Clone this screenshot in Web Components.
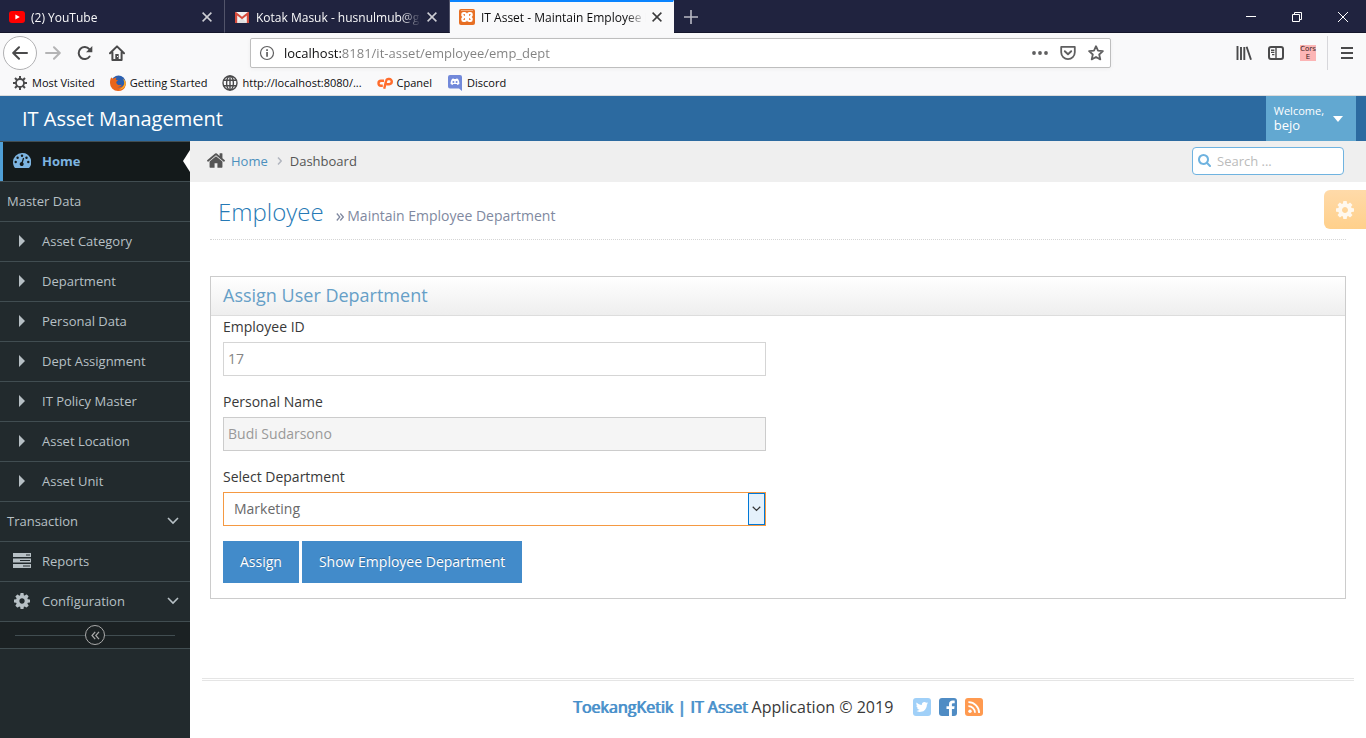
<!DOCTYPE html>
<html lang="en">
<head>
<meta charset="utf-8">
<meta name="viewport" content="width=device-width, initial-scale=1">
<title>IT Asset - Maintain Employee Department</title>
<style>
    html, body {
        margin: 0;
        height: 100%;
    }

    body {
        font-family: "Open Sans", "Noto Sans", sans-serif;
        font-size: 13px;
        color: #393939;
        background: #fff;
    }
</style>
</head>
<body>
<app-window>
    <browser-chrome slot="chrome"></browser-chrome>
    <app-navbar slot="navbar" brand="IT Asset Management" user="bejo"></app-navbar>
    <app-sidebar slot="sidebar">
        <nav-item icon="dashboard" active>Home</nav-item>
        <nav-item>Master Data</nav-item>
        <nav-item icon="caret">Asset Category</nav-item>
        <nav-item icon="caret">Department</nav-item>
        <nav-item icon="caret">Personal Data</nav-item>
        <nav-item icon="caret">Dept Assignment</nav-item>
        <nav-item icon="caret">IT Policy Master</nav-item>
        <nav-item icon="caret">Asset Location</nav-item>
        <nav-item icon="caret">Asset Unit</nav-item>
        <nav-item dropdown>Transaction</nav-item>
        <nav-item icon="tasks">Reports</nav-item>
        <nav-item icon="cog" dropdown>Configuration</nav-item>
    </app-sidebar>
    <app-breadcrumbs current="Dashboard"></app-breadcrumbs>
    <page-content>
        <page-heading subtitle="Maintain Employee Department">Employee</page-heading>
        <widget-box heading="Assign User Department">
            <form-field label="Employee ID" value="17"></form-field>
            <form-field label="Personal Name" value="Budi Sudarsono" disabled></form-field>
            <form-select label="Select Department" value="Marketing"></form-select>
            <button-row>
                <action-button>Assign</action-button>
                <action-button>Show Employee Department</action-button>
            </button-row>
        </widget-box>
    </page-content>
    <app-footer></app-footer>
</app-window>

<script>
const COG = '<path fill="currentColor" d="M1152 896q0-106-75-181t-181-75-181 75-75 181 75 181 181 75 181-75 75-181zm512-109v222q0 12-8 23t-20 13l-185 28q-19 54-39 91 35 50 107 138 10 12 10 25t-9 23q-27 37-99 108t-94 71q-12 0-26-9l-138-108q-44 23-91 38-16 136-29 186-7 28-36 28h-222q-14 0-24.500-8.500t-11.500-21.500l-28-184q-49-16-90-37l-141 107q-10 9-25 9-14 0-25-11-126-114-165-168-7-10-7-23 0-12 8-23 15-21 51-66.500t54-70.500q-27-50-41-99l-183-27q-13-2-21-12.500t-8-23.500v-222q0-12 8-23t19-13l186-28q14-46 39-92-40-57-107-138-10-12-10-24 0-10 9-23 26-36 98.500-107.500t94.500-71.500q13 0 26 10l138 107q44-23 91-38 16-136 29-186 7-28 36-28h222q14 0 24.500 8.500t11.500 21.500l28 184q49 16 90 37l142-107q9-9 24-9 13 0 25 10 129 119 165 170 7 8 7 22 0 12-8 23-15 21-51 66.500t-54 70.500q26 50 41 98l183 28q13 2 21 12.500t8 23.500z"/>';

// name: [viewBox, markup]
const ICONS = {
	cog: ["128 128 1536 1536", COG],
	home: ["90 250 1612 1290", '<path fill="currentColor" d="M1472 992v480q0 26-19 45t-45 19h-384v-384h-256v384h-384q-26 0-45-19t-19-45v-480q0-1 .5-3t.5-3l575-474 575 474q1 2 1 6zm223-69l-62 74q-8 9-21 11h-3q-13 0-21-7l-692-577-692 577q-12 8-24 7-13-2-21-11l-62-74q-8-10-7-23.500t11-21.500l719-599q32-26 76-26t76 26l244 204v-195q0-14 9-23t23-9h192q14 0 23 9t9 23v408l219 182q10 8 11 21.500t-7 23.500z"/>'],
	search: ["64 128 1664 1664", '<path fill="currentColor" d="M1216 832q0-185-131.500-316.500t-316.500-131.500-316.500 131.500-131.500 316.500 131.500 316.500 316.500 131.500 316.500-131.500 131.500-316.500zm512 832q0 52-38 90t-90 38q-54 0-90-38l-343-342q-179 124-399 124-143 0-273.500-55.500t-225-150-150-225-55.500-273.500 55.500-273.500 150-225 225-150 273.500-55.500 273.500 55.500 225 150 150 225 55.500 273.500q0 220-124 399l343 343q37 37 37 90z"/>'],
	dashboard: ["0 0 18 15", '<path fill="currentColor" d="M9 0a9 9 0 0 0-9 9c0 2 .5 3.700 1.400 5.200.2.500.6.800 1 .8h13.200c.4 0 .8-.3 1-.8A9 9 0 0 0 9 0z"/><g fill="#141a1b"><circle cx="2.700" cy="9" r="1.200"/><circle cx="4.600" cy="4.700" r="1.200"/><circle cx="9" cy="2.800" r="1.200"/><circle cx="13.500" cy="4.700" r="1.200"/><circle cx="15.300" cy="9" r="1.200"/><path d="M10 4.800l1.200.4-1.300 4.300a2 2 0 1 1-1.300-.4z"/></g>'],
	tasks: ["0 0 18 15", '<path fill="currentColor" fill-rule="evenodd" d="M0 0h18v4H0zM13 1.500h4v1h-4zM0 5.500h18v4H0zM7 7h10v1H7zM0 11h18v4H0zM10 12.500h7v1h-7z"/>'],
	caret: ["0 0 8 12", '<path fill="currentColor" d="M1 0v12l6-6z"/>'],
	caretDown: ["0 0 10 6", '<path fill="currentColor" d="M0 0h10L5 6z"/>'],
	chevronDown: ["0 0 12 8", '<path fill="none" stroke="currentColor" stroke-width="1.600" d="M1 1l5 5 5-5"/>'],
	chevronRight: ["0 0 5 8", '<path fill="none" stroke="currentColor" stroke-width="1.500" d="M1 .5L4.200 4 1 7.500"/>'],
	doubleRight: ["0 0 8 8", '<path fill="none" stroke="currentColor" stroke-width="1.300" d="M.8 .5L3.800 4 .8 7.500M4.300 .5l3 3.500-3 3.500"/>'],
	doubleLeft: ["0 0 9 9", '<path fill="none" stroke="currentColor" stroke-width="1.200" d="M4.200 .8L1 4.500l3.200 3.700M8 .8L4.800 4.500 8 8.200"/>'],
	twitter: ["0 0 18 18", '<rect width="18" height="18" rx="3" fill="#a0d0f8"/><path fill="#fff" transform="translate(2 2) scale(.0078)" d="M1684 408q-67 98-162 167 1 14 1 42 0 130-38 259.500t-115.500 248.500-184.500 210.500-258 146-323 54.500q-271 0-496-145 35 4 78 4 225 0 401-138-105-2-188-64.500t-114-159.500q33 5 61 5 43 0 85-11-112-23-185.500-111.500t-73.500-205.500v-4q68 38 146 41-66-44-105-115t-39-154q0-88 44-163 121 149 294.500 238.500t371.500 99.500q-8-38-8-74 0-134 94.500-228.500t228.500-94.500q140 0 236 102 109-21 205-78-37 115-142 178 93-10 186-50z"/>'],
	facebook: ["0 0 18 18", '<rect width="18" height="18" rx="3" fill="#4f8cc4"/><path fill="#fff" d="M10 18v-7H7.500V8.200H10V6.300C10 3.900 11.500 2.600 13.600 2.600c1 0 1.900.1 2.100.1v2.500h-1.400c-1.200 0-1.400.6-1.400 1.400v1.600h2.700l-.4 2.800h-2.300v7z"/>'],
	rss: ["0 0 18 18", '<rect width="18" height="18" rx="3" fill="#ff9a50"/><circle cx="5" cy="13.200" r="1.700" fill="#fff"/><path fill="none" stroke="#fff" stroke-width="1.800" d="M3.400 8.200a6.500 6.500 0 0 1 6.600 6.600M3.400 4.200a10.500 10.500 0 0 1 10.700 10.700"/>'],
	youtube: ["0 0 16 12", '<rect width="16" height="12" rx="3" fill="#f00"/><path fill="#fff" d="M6.400 3.400v5.200L10.800 6z"/>'],
	gmail: ["0 0 14 11", '<path fill="#f2f2f2" d="M0 0h14v11H0z"/><path fill="#ccc" d="M2 11l5-5 5 5z" opacity=".5"/><path fill="#d54b3d" d="M0 0h1l6 4.800L13 0h1v11h-2.200V3.400L7 7.200 2.200 3.400V11H0z"/>'],
	xampp: ["0 0 16 16", '<rect width="16" height="16" rx="2" fill="#e76f24"/><path fill="#f4ab7c" d="M2 1h12v1H2z"/><g fill="none" stroke="#fff" stroke-width="2.200" stroke-linejoin="round"><path d="M3.400 6.400V5.200c0-.7.500-1.200 1.200-1.200h1c1 0 1.400.6 1.400 1.400v5.200c0 .8-.5 1.400-1.400 1.400h-1c-.7 0-1.200-.5-1.200-1.200V9.600L5 8z"/><path d="M12.600 6.400V5.200c0-.7-.5-1.200-1.200-1.200h-1C9.400 4 9 4.600 9 5.400v5.200c0 .8.5 1.400 1.400 1.400h1c.7 0 1.200-.5 1.200-1.200V9.600L11 8z"/></g><path fill="#fff" d="M5 7h6v2H5z"/>'],
	close: ["0 0 10 10", '<path fill="none" stroke="currentColor" stroke-width="1.500" d="M.6 .6l8.800 8.800M9.400 .6L.6 9.400"/>'],
	plus: ["0 0 14 14", '<path fill="none" stroke="currentColor" stroke-width="1.600" d="M7 0v14M0 7h14"/>'],
	minimize: ["0 0 10 10", '<path fill="currentColor" d="M0 4h10v1H0z"/>'],
	restore: ["0 0 10 10", '<path fill="none" stroke="currentColor" d="M.5 2.500h7v7h-7zM2.500 2.500v-2h7v7h-2"/>'],
	winClose: ["0 0 10 10", '<path fill="none" stroke="currentColor" d="M0 0l10 10M10 0L0 10"/>'],
	back: ["0 0 16 16", '<path fill="none" stroke="currentColor" stroke-width="2" stroke-linecap="round" stroke-linejoin="round" d="M15 8H1.500M7 2.200L1.200 8 7 13.800"/>'],
	forward: ["0 0 16 16", '<path fill="none" stroke="currentColor" stroke-width="2" stroke-linecap="round" stroke-linejoin="round" d="M1 8h13.500M9 2.200L14.800 8 9 13.800"/>'],
	reload: ["0 0 16 16", '<path fill="none" stroke="currentColor" stroke-width="2" stroke-linecap="round" d="M12.600 11.500A6 6 0 1 1 12.300 4.200"/><path fill="currentColor" d="M15.300 1v6.200H9z"/>'],
	house: ["0 0 16 16", '<path fill="none" stroke="currentColor" stroke-width="2" stroke-linejoin="round" stroke-linecap="round" d="M1 8.200L8 1.400l7 6.800M3.400 7.500V15h9.200V7.500"/><path fill="currentColor" d="M6.300 9h3.400v6H6.300z"/><path fill="#f9f9fa" d="M8 11h1v1H8z"/>'],
	info: ["0 0 16 16", '<circle cx="8" cy="8" r="6.500" fill="none" stroke="currentColor" stroke-width="1.200"/><path fill="currentColor" d="M7.200 4.300h1.700V6H7.200zM7.200 7h1.700v4.800H7.200z"/>'],
	dots: ["0 0 16 16", '<g fill="currentColor"><circle cx="2" cy="8" r="1.900"/><circle cx="8" cy="8" r="1.900"/><circle cx="14" cy="8" r="1.900"/></g>'],
	pocket: ["0 0 16 16", '<path fill="none" stroke="currentColor" stroke-width="1.800" stroke-linejoin="round" d="M1.200 1.900h13.600v5.400a6.800 6.800 0 0 1-13.600 0z"/><path fill="none" stroke="currentColor" stroke-width="1.900" stroke-linecap="round" stroke-linejoin="round" d="M4.800 6.200L8 9.200l3.200-3"/>'],
	star: ["0 0 16 16", '<path fill="none" stroke="currentColor" stroke-width="1.800" stroke-linejoin="round" d="M8 1.200l2 4.500 4.900.5-3.700 3.300 1.100 4.900L8 12l-4.300 2.400 1.100-4.900L1.100 6.200 6 5.700z"/>'],
	library: ["0 0 16 16", '<path fill="none" stroke="currentColor" stroke-width="1.900" d="M1.500 1v14M5 2v13M8.300 2v13M10.600 1.800l4.400 13"/>'],
	sidebars: ["0 0 16 16", '<rect x="1" y="2" width="14" height="12" rx="2" fill="none" stroke="currentColor" stroke-width="2"/><path fill="none" stroke="currentColor" stroke-width="1.400" d="M8 2v12M3 5.200h3.400M3 7.400h3.400M4 9.600h2.400"/>'],
	menu: ["0 0 12 12", '<path fill="currentColor" d="M0 0h12v2H0zM0 5h12v2H0zM0 10h12v2H0z"/>'],
	gear: ["0 0 16 16", '<circle cx="8" cy="8" r="4" fill="none" stroke="currentColor" stroke-width="1.800"/><path stroke="currentColor" stroke-width="2" d="M8 1v3M8 12v3M1 8h3M12 8h3M3 3l2.200 2.200M10.800 10.800L13 13M13 3l-2.200 2.200M5.200 10.800L3 13"/>'],
	firefox: ["0 0 16 16", '<circle cx="8.500" cy="7.500" r="7" fill="#2a5fb0"/><path fill="#e8641b" d="M1.300 2.200c.5 1 1.200 1.300 2.600 1.300 1-.8 2.200-.8 2.900-.8-.7.600-1.100 1.300-.9 2.100l2 .4c.1.800-1 1-1.700 1.700 0 2.400 2.800 4 5.600 2.600-.6 2-2.600 2.700-4.500 2.400 3 1.300 6.400-.4 7-3.600.3-1.600 0-3-.5-4 1.700 1.700 2.300 4 2 5.600A8 8 0 0 1 8 16 8 8 0 0 1 0 8c0-2.300.4-4.400 1.300-5.800z"/><path fill="#fbb42c" d="M12.600 3.800c2.900 3 2.400 8.700-3.600 10.700 4 0 6.900-3 6.700-6.800-.3-1.700-1.500-3.200-3.100-3.900z"/>'],
	globe: ["0 0 16 16", '<g fill="none" stroke="currentColor" stroke-width="1.400"><circle cx="8" cy="8" r="7"/><ellipse cx="8" cy="8" rx="3.400" ry="7"/><path d="M8 1v14M1.800 5.300h12.400M1.800 10.700h12.400"/></g>'],
	cpanel: ["0 0 16 12", '<g fill="none" stroke="#ff6c2c" stroke-width="2.400"><path d="M7 3.800H4a2.500 2.500 0 0 0 0 5h1.800"/><path d="M7.200 11.800L9.200 3.600a2 2 0 0 1 2-1.600h1a2.600 2.600 0 0 1 0 5.200H9.500"/></g>'],
	discord: ["0 0 14 16", '<path fill="#7289da" d="M2 0h10a2 2 0 0 1 2 2v14l-3-2.500H2a2 2 0 0 1-2-2V2a2 2 0 0 1 2-2z"/><path fill="#fff" fill-rule="evenodd" d="M4.200 3.800l1.400-.3.300.5h2.200l.3-.5 1.400.3c1.300 1.700 1.700 3.700 1.600 5.300l-2 1-.7-1H5.300l-.7 1-2-1c-.1-1.600.3-3.600 1.600-5.300zM5.400 6a1 1 0 1 0 0 2 1 1 0 0 0 0-2zM8.600 6a1 1 0 1 0 0 2 1 1 0 0 0 0-2z"/>']
};

function define(name, html, setup) {
	const template = document.createElement("template");
	template.innerHTML = html;
	customElements.define(name, class extends HTMLElement {
		constructor() {
			super();
			this.attachShadow({ mode: "open" });
			this.shadowRoot.appendChild(template.content.cloneNode(true));
		}
		connectedCallback() {
			if (setup) setup(this, selector => this.shadowRoot.querySelector(selector));
		}
	});
}

// size comes from --w and --h on the element
define("ui-icon", `
<style>
    :host {
        display: inline-block;
        flex: none;
        width: var(--w, 16px);
        height: var(--h, var(--w, 16px));
    }
    svg {
        display: block;
        width: 100%;
        height: 100%;
    }
</style>
<svg aria-hidden="true"></svg>
`, (host, $) => {
	const [viewBox, markup] = ICONS[host.getAttribute("name")];
	$("svg").setAttribute("viewBox", viewBox);
	$("svg").innerHTML = markup;
});

define("app-window", `
<style>
    :host {
        display: flex;
        flex-direction: column;
        min-height: 100vh;
    }
    .body {
        flex: 1;
        display: flex;
    }
    main {
        flex: 1;
        min-width: 0;
        display: flex;
        flex-direction: column;
        position: relative;
    }
    /* floats over the page's right edge */
    .settings {
        position: absolute;
        right: 0;
        top: 49px;
        width: 42px;
        height: 39px;
        padding: 0;
        border: 0;
        border-radius: 6px 0 0 6px;
        background: linear-gradient(#ffdaa9, #ffd08b);
        color: #fff8ee;
        display: flex;
        align-items: center;
        justify-content: center;
        --w: 18px;
    }
</style>
<slot name="chrome"></slot>
<slot name="navbar"></slot>
<div class="body">
    <slot name="sidebar"></slot>
    <main>
        <slot></slot>
        <button class="settings" aria-label="Settings"><ui-icon name="cog"></ui-icon></button>
    </main>
</div>
`);

define("browser-tab", `
<style>
    :host {
        display: flex;
        align-items: center;
        box-sizing: border-box;
        flex: 0 1 225px;
        min-width: 0;
        height: 33px;
        padding: 2px 12px 0 9px;
        border-right: 1px solid #52546a;
        border-bottom: 1px solid #14162b;
        color: #f9f9fa;
        font-size: 12px;
    }
    :host([active]) {
        flex-basis: 224px;
        padding-top: 0;
        padding-right: 11px;
        background: #f9f9fa;
        border-top: 2px solid #0a84ff;
        border-right-color: #f9f9fa;
        border-bottom-color: #f9f9fa;
        color: #0c0c0d;
    }
    span {
        flex: 1;
        min-width: 0;
        margin: 0 6px;
        overflow: hidden;
        white-space: nowrap;
        -webkit-mask-image: linear-gradient(to left, transparent, #000 20px);
        mask-image: linear-gradient(to left, transparent, #000 20px);
    }
    button {
        padding: 0;
        border: 0;
        background: none;
        color: inherit;
        opacity: 0.8;
        display: flex;
        --w: 10px;
    }
</style>
<span><slot></slot></span>
<button aria-label="Close tab"><ui-icon name="close"></ui-icon></button>
`, (host, $) => {
	const icon = document.createElement("ui-icon");
	icon.setAttribute("name", host.getAttribute("icon"));
	icon.style.setProperty("--h", host.getAttribute("icon-height") || "16px");
	$("span").before(icon);
});

define("book-mark", `
<style>
    :host { display: block; }
    a {
        display: flex;
        align-items: center;
        gap: 4px;
        color: #0c0c0d;
        font-size: 11px;
        line-height: 16px;
        white-space: nowrap;
        text-decoration: none;
    }
    ui-icon { color: #4a4a4b; }
</style>
<a href="#"><slot></slot></a>
`, (host, $) => {
	const icon = document.createElement("ui-icon");
	icon.setAttribute("name", host.getAttribute("icon"));
	$("a").prepend(icon);
});

define("browser-chrome", `
<style>
    :host {
        display: block;
        background: #f9f9fa;
        border-bottom: 1px solid #dcdcdc;
        color: #4a4a4b;
    }
    button {
        flex: none;
        display: flex;
        align-items: center;
        justify-content: center;
        padding: 0;
        border: 0;
        background: none;
        color: inherit;
    }
    .tabs {
        display: flex;
        height: 33px;
        background: #20233f;
        box-shadow: inset 0 -1px #14162b;
    }
    .new {
        width: 34px;
        color: #b9bac5;
        --w: 14px;
    }
    .controls {
        margin-left: auto;
        display: flex;
        color: #fff;
        --w: 10px;
    }
    .controls button { width: 46px; }
    .toolbar {
        display: flex;
        align-items: center;
        height: 40px;
        padding: 0 3px;
    }
    .toolbar > button {
        width: 32px;
        height: 32px;
    }
    .toolbar > .back {
        width: 34px;
        height: 34px;
        box-sizing: border-box;
        border: 1px solid #b1b1b3;
        border-radius: 50%;
        background: #fff;
    }
    .toolbar > .forward { color: #b4b4b5; }
    .url {
        flex: 1;
        min-width: 0;
        display: flex;
        align-items: center;
        box-sizing: border-box;
        height: 30px;
        margin: 0 117px;
        padding: 0 0 0 8px;
        border: 1px solid #bebebe;
        border-radius: 2px;
        background: #fff;
        box-shadow: 0 1px 4px rgba(0, 0, 0, 0.05);
        color: #5f5f60;
    }
    .url button { width: 28px; }
    /* the host part is darker than the path */
    input {
        flex: 1;
        min-width: 0;
        padding: 0 9px;
        border: 0;
        outline: 0;
        font: 13px "Open Sans", sans-serif;
        color: #737373;
        background: linear-gradient(to right, #0c0c0d 67px, #808080 67px);
        -webkit-background-clip: text;
        background-clip: text;
        -webkit-text-fill-color: transparent;
    }
    .cors {
        width: 16px;
        height: 16px;
        background: #fcb5b5;
        color: #3a2222;
        font: 7px/8px "DejaVu Sans", sans-serif;
        text-align: center;
    }
    .divider {
        width: 1px;
        height: 34px;
        margin: 0 3px;
        background: #d7d7db;
    }
    .menu { --w: 12px; }
    .bookmarks {
        display: flex;
        gap: 15px;
        padding: 2px 12px 4px;
    }
</style>
<div class="tabs">
    <browser-tab icon="youtube" icon-height="12px">(2) YouTube</browser-tab>
    <browser-tab icon="gmail" icon-height="11px">Kotak Masuk - husnulmub@gmail</browser-tab>
    <browser-tab icon="xampp" active>IT Asset - Maintain Employee Department</browser-tab>
    <button class="new" aria-label="New tab"><ui-icon name="plus"></ui-icon></button>
    <div class="controls">
        <button aria-label="Minimize"><ui-icon name="minimize"></ui-icon></button>
        <button aria-label="Restore"><ui-icon name="restore"></ui-icon></button>
        <button aria-label="Close"><ui-icon name="winClose"></ui-icon></button>
    </div>
</div>
<div class="toolbar">
    <button class="back" aria-label="Back"><ui-icon name="back"></ui-icon></button>
    <button class="forward" aria-label="Forward"><ui-icon name="forward"></ui-icon></button>
    <button aria-label="Reload"><ui-icon name="reload"></ui-icon></button>
    <button aria-label="Home"><ui-icon name="house"></ui-icon></button>
    <div class="url">
        <ui-icon name="info"></ui-icon>
        <input type="text" aria-label="Address" value="localhost:8181/it-asset/employee/emp_dept">
        <button aria-label="Page actions"><ui-icon name="dots"></ui-icon></button>
        <button aria-label="Pocket"><ui-icon name="pocket"></ui-icon></button>
        <button aria-label="Bookmark"><ui-icon name="star"></ui-icon></button>
    </div>
    <button aria-label="Library"><ui-icon name="library"></ui-icon></button>
    <button aria-label="Sidebars"><ui-icon name="sidebars"></ui-icon></button>
    <button aria-label="Cors"><span class="cors">Cors E</span></button>
    <span class="divider"></span>
    <button class="menu" aria-label="Menu"><ui-icon name="menu"></ui-icon></button>
</div>
<div class="bookmarks">
    <book-mark icon="gear">Most Visited</book-mark>
    <book-mark icon="firefox">Getting Started</book-mark>
    <book-mark icon="globe">http://localhost:8080/...</book-mark>
    <book-mark icon="cpanel">Cpanel</book-mark>
    <book-mark icon="discord">Discord</book-mark>
</div>
`);

define("app-navbar", `
<style>
    :host {
        display: flex;
        justify-content: space-between;
        height: 45px;
        padding: 0 10px 0 22px;
        background: #2c6aa0;
        color: #fff;
    }
    a {
        color: inherit;
        font-size: 20px;
        line-height: 45px;
        text-decoration: none;
    }
    button {
        display: flex;
        align-items: center;
        gap: 9px;
        padding: 0 13px 0 8px;
        border: 0;
        background: #62a8d1;
        color: inherit;
        font: 13px/15px "Open Sans", sans-serif;
        text-align: left;
        --w: 10px;
        --h: 6px;
    }
    button > span { padding-bottom: 2px; }
    small {
        display: block;
        font-size: 11px;
    }
</style>
<a href="#"></a>
<button><span><small>Welcome,</small><span class="user"></span></span><ui-icon name="caretDown"></ui-icon></button>
`, (host, $) => {
	$("a").textContent = host.getAttribute("brand");
	$(".user").textContent = host.getAttribute("user");
});

define("app-sidebar", `
<style>
    :host {
        flex: none;
        width: 190px;
        background: #222a2d;
    }
    nav { border-top: 1px solid #414d51; }
    .toggle {
        display: flex;
        align-items: center;
        height: 26px;
        padding: 0 15px;
        background: #1b2123;
        border-bottom: 1px solid #414d51;
    }
    .toggle::before, .toggle::after {
        content: "";
        flex: 1;
        height: 1px;
        background: #414d51;
    }
    button {
        display: flex;
        align-items: center;
        justify-content: center;
        width: 20px;
        height: 20px;
        padding: 0;
        border: 1px solid #aaa;
        border-radius: 50%;
        background: none;
        color: #aaa;
        --w: 9px;
    }
</style>
<nav><slot></slot></nav>
<div class="toggle"><button aria-label="Collapse menu"><ui-icon name="doubleLeft"></ui-icon></button></div>
`);

define("nav-item", `
<style>
    :host {
        display: block;
        position: relative;
        border-bottom: 1px solid #414d51;
        color: #b7c0c5;
    }
    a {
        display: flex;
        align-items: center;
        height: 37px;
        padding: 0 11px 2px 7px;
        color: inherit;
        text-decoration: none;
    }
    .icon {
        width: 30px;
        margin-right: 5px;
        display: flex;
        justify-content: center;
        --w: 18px;
        --h: 15px;
    }
    .icon.caret {
        --w: 8px;
        --h: 12px;
    }
    .icon.cog {
        --w: 16px;
        --h: 16px;
    }
    .arrow {
        margin-left: auto;
        --w: 12px;
        --h: 8px;
    }
    [hidden] { display: none; }
    :host([active]) {
        background: #141a1b;
        color: #7db4e0;
        font-weight: bold;
    }
    :host([active]) a {
        border-left: 3px solid #4f9fd6;
        padding-left: 4px;
    }
    /* notch pointing at the open page */
    :host([active])::after {
        content: "";
        position: absolute;
        right: 0;
        top: 8px;
        border: solid transparent;
        border-width: 11px 7px 11px 0;
        border-right-color: #fff;
    }
</style>
<a href="#"><span class="icon" hidden></span><slot></slot><ui-icon class="arrow" name="chevronDown"></ui-icon></a>
`, (host, $) => {
	const name = host.getAttribute("icon");
	if (name) {
		$(".icon").innerHTML = `<ui-icon name="${name}"></ui-icon>`;
		$(".icon").classList.add(name);
		$(".icon").hidden = false;
	}
	$(".arrow").hidden = !host.hasAttribute("dropdown");
});

define("app-breadcrumbs", `
<style>
    :host {
        display: flex;
        align-items: center;
        justify-content: space-between;
        height: 39px;
        padding: 0 22px 2px 17px;
        background: #efefef;
        color: #555;
    }
    nav {
        display: flex;
        align-items: center;
    }
    .home {
        margin-right: 6px;
        --w: 18px;
        --h: 15px;
    }
    .sep {
        margin: 0 8px 0 9px;
        color: #b2b6bf;
        --w: 5px;
        --h: 8px;
    }
    a {
        color: #4c8fbd;
        text-decoration: none;
    }
    label {
        display: flex;
        align-items: center;
        box-sizing: border-box;
        width: 152px;
        height: 28px;
        padding: 0 6px 0 5px;
        gap: 6px;
        border: 1px solid #6fb3e0;
        border-radius: 4px;
        background: #fff;
        color: #6fb3e0;
        --w: 13px;
    }
    input {
        flex: 1;
        min-width: 0;
        padding: 0;
        border: 0;
        outline: 0;
        background: none;
        font: 13px "Open Sans", sans-serif;
        color: #666;
    }
    input::placeholder { color: #bbb; }
</style>
<nav>
    <ui-icon class="home" name="home"></ui-icon>
    <a href="#">Home</a>
    <ui-icon class="sep" name="chevronRight"></ui-icon>
    <span class="current"></span>
</nav>
<label><ui-icon name="search"></ui-icon><input type="text" placeholder="Search ..." aria-label="Search"></label>
`, (host, $) => {
	$(".current").textContent = host.getAttribute("current");
});

define("page-content", `
<style>
    :host {
        display: flex;
        flex-direction: column;
        gap: 36px;
        padding: 12px 20px 24px;
    }
</style>
<slot></slot>
`);

define("page-heading", `
<style>
    :host {
        display: block;
        padding: 0 8px 9px;
        border-bottom: 1px dotted #d5d5d5;
    }
    h1 {
        display: flex;
        align-items: baseline;
        margin: 0;
        color: #2679b5;
        font-size: 24px;
        font-weight: 300;
        line-height: 36px;
    }
    small {
        margin-left: 12px;
        color: #8089a0;
        font-size: 14px;
        font-weight: 400;
        line-height: 20px;
        --w: 8px;
    }
</style>
<h1><slot></slot><small><ui-icon name="doubleRight"></ui-icon> <span></span></small></h1>
`, (host, $) => {
	$("span").textContent = host.getAttribute("subtitle");
});

define("widget-box", `
<style>
    :host {
        display: block;
        border: 1px solid #ccc;
    }
    h4 {
        margin: 0;
        padding: 0 12px 2px;
        border-bottom: 1px solid #ddd;
        background: linear-gradient(#fff, #eee);
        color: #669fc7;
        font-size: 18px;
        font-weight: 400;
        line-height: 36px;
    }
    form {
        display: flex;
        flex-direction: column;
        gap: 15px;
        padding: 0 12px 15px;
    }
</style>
<h4></h4>
<form><slot></slot></form>
`, (host, $) => {
	$("h4").textContent = host.getAttribute("heading");
});

const FIELD_STYLE = `
    :host {
        display: block;
        width: calc(50% - 12px);
    }
    label {
        display: block;
        margin-bottom: 5px;
        font-size: 14px;
        line-height: 21px;
    }
    input, select {
        display: block;
        box-sizing: border-box;
        width: 100%;
        height: 34px;
        margin: 0;
        border: 1px solid #d5d5d5;
        border-radius: 0;
        outline: 0;
        background: #fff;
        color: #858585;
        font: 14px "Open Sans", sans-serif;
    }
`;

define("form-field", `
<style>
    ${FIELD_STYLE}
    input { padding: 0 4px 2px; }
    input:disabled {
        background: #f5f5f5;
        border-color: #ccc;
        color: #999;
    }
</style>
<label for="field"></label>
<input id="field" type="text">
`, (host, $) => {
	$("label").textContent = host.getAttribute("label");
	$("input").value = host.getAttribute("value");
	$("input").disabled = host.hasAttribute("disabled");
});

define("form-select", `
<style>
    ${FIELD_STYLE}
    .box { display: grid; }
    .box > * { grid-area: 1 / 1; }
    select {
        padding: 0 24px 2px 10px;
        border-color: #f59942;
        color: #696969;
        appearance: none;
        -webkit-appearance: none;
    }
    .arrow {
        justify-self: end;
        display: flex;
        align-items: center;
        justify-content: center;
        box-sizing: border-box;
        width: 17px;
        margin: 1px;
        border: 1px solid #0078d7;
        background: #e5f1fb;
        color: #333;
        pointer-events: none;
        --w: 9px;
        --h: 6px;
    }
</style>
<label for="field"></label>
<div class="box">
    <select id="field"><option></option></select>
    <span class="arrow"><ui-icon name="chevronDown"></ui-icon></span>
</div>
`, (host, $) => {
	$("label").textContent = host.getAttribute("label");
	$("option").textContent = host.getAttribute("value");
});

define("button-row", `
<style>
    :host {
        display: flex;
        gap: 3px;
    }
</style>
<slot></slot>
`);

define("action-button", `
<style>
    :host { display: block; }
    button {
        height: 42px;
        padding: 0 17px 2px;
        border: 0;
        background: #428bca;
        color: #fff;
        font: 14px "Open Sans", sans-serif;
        text-shadow: 0 -1px 0 rgba(0, 0, 0, 0.25);
    }
</style>
<button type="button"><slot></slot></button>
`);

define("app-footer", `
<style>
    :host {
        display: flex;
        align-items: center;
        justify-content: center;
        gap: 20px;
        height: 51px;
        margin: auto 12px 0;
        padding-bottom: 6px;
        border-top: 3px double #e5e5e5;
        font-size: 16px;
    }
    .owner {
        color: #478fca;
        text-shadow: 1px 0 0 #478fca;
    }
    .social {
        display: flex;
        gap: 8px;
        --w: 18px;
    }
    .social a { display: flex; }
</style>
<span><span class="owner">ToekangKetik | IT Asset</span> Application © 2019</span>
<span class="social">
    <a href="#" aria-label="Twitter"><ui-icon name="twitter"></ui-icon></a>
    <a href="#" aria-label="Facebook"><ui-icon name="facebook"></ui-icon></a>
    <a href="#" aria-label="RSS"><ui-icon name="rss"></ui-icon></a>
</span>
`);
</script>
</body>
</html>
